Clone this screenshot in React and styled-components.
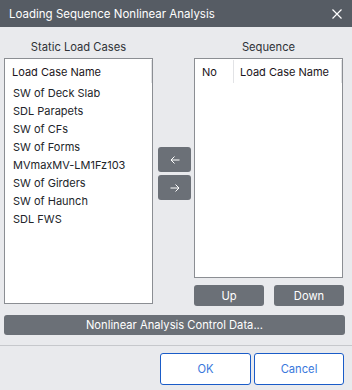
import React from 'react'
import styled, { createGlobalStyle } from 'styled-components'

const cases = [
    'SW of Deck Slab',
    'SDL Parapets',
    'SW of CFs',
    'SW of Forms',
    'MVmaxMV-LM1Fz103',
    'SW of Girders',
    'SW of Haunch',
    'SDL FWS',
]

const Global = createGlobalStyle`
    html, body {
        margin: 0;
        padding: 0;
        background: #e9eaed;
    }
    body {
        font-family: Inter, "Noto Sans", sans-serif;
        font-size: 11px;
        color: #22252a;
    }
`

const Dialog = styled.div`
    width: 352px;
    height: 390px;
    display: flex;
    flex-direction: column;
    background: #e9eaed;
    overflow: hidden;
`

const TitleBar = styled.div`
    height: 27px;
    flex: none;
    display: flex;
    align-items: center;
    justify-content: space-between;
    padding: 0 10px 0 9px;
    background: #565c64;
    color: #ffffff;
    font-size: 11.5px;
`

const Body = styled.div`
    display: grid;
    grid-template-columns: 149px 35px 149px;
    column-gap: 3px;
    padding: 0 4px;
    margin-top: 11px;
`

const Column = styled.div`
    display: flex;
    flex-direction: column;
`

const Label = styled.div`
    height: 18px;
    line-height: 18px;
    text-align: center;
    font-size: 11.2px;
    color: #2f3237;
    margin-bottom: 2px;
`

const ListBox = styled.div`
    height: ${p => p.h}px;
    box-sizing: border-box;
    background: #ffffff;
    border: 1px solid #8b8e93;
`

const HeadRow = styled.div`
    height: 25px;
    display: flex;
    align-items: stretch;
`

const HeadCell = styled.div`
    width: ${p => p.w ? p.w + 'px' : 'auto'};
    flex: ${p => p.w ? 'none' : 1};
    display: flex;
    align-items: center;
    padding-left: ${p => p.pl}px;
    font-size: 11px;
    color: #1a1420;
    white-space: nowrap;
    border-right: 1px solid #e2e3e6;
    margin: 1px 0 1px;
`

const Item = styled.div`
    height: 18px;
    line-height: 18px;
    padding-left: 8px;
    font-size: 11px;
`

const Arrows = styled.div`
    display: flex;
    flex-direction: column;
    gap: 3px;
    padding-top: 109px;
    margin-left: 2px;
`

const GrayButton = styled.button`
    box-sizing: border-box;
    width: ${p => p.w ? p.w + 'px' : '100%'};
    height: ${p => p.h}px;
    border: none;
    border-radius: 3px;
    background: #6b7077;
    color: #ffffff;
    font-family: Inter, "Noto Sans", sans-serif;
    font-size: 11.2px;
    display: flex;
    align-items: center;
    justify-content: center;
    padding: 0;
`

const UpDown = styled.div`
    display: flex;
    justify-content: space-between;
    margin-top: 7px;
    width: 150px;
`

const Wide = styled.div`
    padding: 0 7px 0 4px;
    margin-top: 9px;
`

const Rule = styled.div`
    height: 1px;
    background: #c6c8cc;
    margin-top: 10px;
`

const Footer = styled.div`
    display: flex;
    justify-content: flex-end;
    gap: 3px;
    padding: 7px 8px 0 0;
`

const BlueButton = styled.button`
    box-sizing: border-box;
    width: ${p => p.w}px;
    height: 32px;
    background: #ffffff;
    border: 1px solid #1a5cc8;
    border-radius: 3px;
    color: #3a78dc;
    font-family: Inter, "Noto Sans", sans-serif;
    font-size: 11.2px;
`

function Arrow({ dir }) {
    return (
        <svg width="10" height="8" viewBox="0 0 10 8" fill="none" stroke="#ffffff" strokeWidth="1">
            {dir === 'left'
                ? <path d="M9.5 4H1M4.5 0.5L1 4L4.5 7.5" />
                : <path d="M0.5 4H9M5.5 0.5L9 4L5.5 7.5" />}
        </svg>
    )
}

export default function App() {
    return (
        <>
            <Global />
            <Dialog>
                <TitleBar>
                    <span>Loading Sequence Nonlinear Analysis</span>
                    <svg width="10" height="10" viewBox="0 0 10 10" stroke="#ffffff" strokeWidth="1.2">
                        <path d="M0.5 0.5L9.5 9.5M9.5 0.5L0.5 9.5" />
                    </svg>
                </TitleBar>
                <Body>
                    <Column>
                        <Label>Static Load Cases</Label>
                        <ListBox h={246}>
                            <HeadRow>
                                <HeadCell pl={7}>Load Case Name</HeadCell>
                            </HeadRow>
                            {cases.map(c => <Item key={c}>{c}</Item>)}
                        </ListBox>
                    </Column>
                    <Arrows>
                        <GrayButton h={25}><Arrow dir="left" /></GrayButton>
                        <GrayButton h={25}><Arrow dir="right" /></GrayButton>
                    </Arrows>
                    <Column>
                        <Label>Sequence</Label>
                        <ListBox h={220}>
                            <HeadRow>
                                <HeadCell w={31} pl={7}>No</HeadCell>
                                <HeadCell pl={6}>Load Case Name</HeadCell>
                            </HeadRow>
                        </ListBox>
                        <UpDown>
                            <GrayButton w={70} h={21}>Up</GrayButton>
                            <GrayButton w={70} h={21}>Down</GrayButton>
                        </UpDown>
                    </Column>
                </Body>
                <Wide>
                    <GrayButton h={20}>Nonlinear Analysis Control Data...</GrayButton>
                </Wide>
                <Rule />
                <Footer>
                    <BlueButton w={91}>OK</BlueButton>
                    <BlueButton w={90}>Cancel</BlueButton>
                </Footer>
            </Dialog>
        </>
    )
}
